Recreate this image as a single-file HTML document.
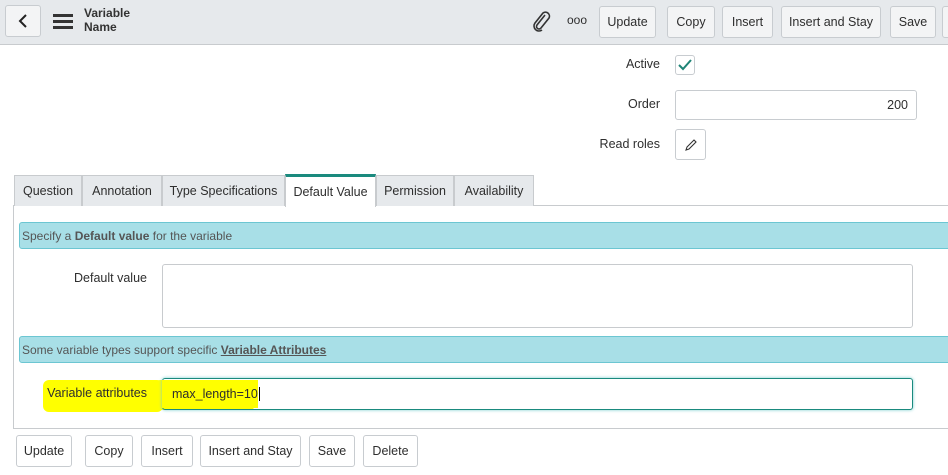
<!DOCTYPE html><html><head><style>
*{box-sizing:border-box}body{margin:0;width:948px;height:475px;overflow:hidden;background:#fff;font-family:"Liberation Sans",sans-serif;font-size:12.5px;color:#2e2e2e;position:relative}
.a{position:absolute}
.hdr{left:0;top:0;width:948px;height:45px;background:#e6e9ec;border-bottom:1px solid #c8cbce}
.btn{position:absolute;border:1px solid #c8ccd0;border-radius:3px;background:#f3f4f5;display:flex;align-items:center;justify-content:center;font-size:12.5px;color:#2e2e2e}
.wb{background:#fff}
.lbl{position:absolute;text-align:right;font-size:12.5px}
.tab{position:absolute;top:175px;height:31px;background:#e6e9ec;border:1px solid #c8cbce;border-bottom:none;display:flex;align-items:center;justify-content:center;font-size:12.5px}
.bar{position:absolute;left:19px;width:935px;height:27px;background:#a8dfe7;border:1px solid #6cc6d2;border-radius:3px;color:#555;padding-left:2px;display:flex;align-items:center;font-size:12px}
</style></head><body>
<div class="a hdr"></div>
<div class="btn" style="left:5px;top:5px;width:36px;height:32px;background:#f3f4f5"><svg width="12" height="16" viewBox="0 0 12 16"><path d="M9 2L3 8l6 6" stroke="#222" stroke-width="2" fill="none"/></svg></div>
<div class="a" style="left:53px;top:14px;width:20px;height:3px;background:#333"></div>
<div class="a" style="left:53px;top:20px;width:20px;height:3px;background:#333"></div>
<div class="a" style="left:53px;top:26px;width:20px;height:3px;background:#333"></div>
<div class="a" style="left:84px;top:6px;font-size:12px;line-height:14px;color:#333;font-weight:600">Variable<br>Name</div>
<svg class="a" style="left:531px;top:10px" width="20" height="22" viewBox="0 0 20 22"><path d="M14 5L6 15a2.5 2.5 0 0 0 4 3l8-10a4 4 0 0 0-6-5L4 13a5 5 0 0 0 7 7" stroke="#333" stroke-width="1.6" fill="none"/></svg>
<div class="a" style="left:567px;top:13px;font-size:12px;letter-spacing:0px">ooo</div>
<div class="btn" style="left:599px;top:6px;width:57px;height:32px">Update</div>
<div class="btn" style="left:667px;top:6px;width:48px;height:32px">Copy</div>
<div class="btn" style="left:722px;top:6px;width:51px;height:32px">Insert</div>
<div class="btn" style="left:781px;top:6px;width:100px;height:32px">Insert and Stay</div>
<div class="btn" style="left:890px;top:6px;width:46px;height:32px">Save</div>
<div class="btn" style="left:942px;top:6px;width:20px;height:32px"></div>

<div class="lbl" style="left:560px;width:100px;top:57px">Active</div>
<div class="btn wb" style="left:675px;top:55px;width:20px;height:20px"><svg width="14" height="12" viewBox="0 0 14 12"><path d="M1 6l4 4 8-9" stroke="#1f8476" stroke-width="2" fill="none"/></svg></div>
<div class="lbl" style="left:560px;width:100px;top:97px">Order</div>
<div class="btn wb" style="left:675px;top:90px;width:242px;height:30px;justify-content:flex-end;padding-right:8px">200</div>
<div class="lbl" style="left:560px;width:100px;top:137px">Read roles</div>
<div class="btn wb" style="left:675px;top:129px;width:31px;height:31px"><svg width="14" height="14" viewBox="0 0 14 14"><path d="M2 12l1-3 7-7 2 2-7 7z" stroke="#333" stroke-width="1.1" fill="none"/></svg></div>

<div class="a" style="left:13px;top:205px;width:940px;height:224px;border:1px solid #c8cbce"></div>
<div class="tab" style="left:14px;width:68px">Question</div>
<div class="tab" style="left:82px;width:80px">Annotation</div>
<div class="tab" style="left:162px;width:123px">Type Specifications</div>
<div class="tab" style="left:285px;width:91px;background:#fff;border-top:3px solid #1a8a7e;top:174px;height:33px;border-bottom:none">Default Value</div>
<div class="tab" style="left:376px;width:78px">Permission</div>
<div class="tab" style="left:454px;width:80px">Availability</div>
<div class="bar" style="top:222px">Specify a&nbsp;<b style="font-weight:600;color:#555">Default value</b>&nbsp;for the variable</div>
<div class="lbl" style="left:40px;width:107px;top:271px">Default value</div>
<div class="a" style="left:162px;top:264px;width:751px;height:64px;border:1px solid #c8cbce;border-radius:3px"></div>
<div class="bar" style="top:336px">Some variable types support specific&nbsp;<u style="font-weight:600;color:#555">Variable Attributes</u></div>
<div class="a" style="left:43px;top:380px;width:120px;height:32px;background:#ffff00;border-radius:6px"></div>
<div class="a" style="left:155px;top:380px;width:100px;height:30px;background:#ffff00;border-radius:5px"></div>
<div class="lbl" style="left:40px;width:107px;top:386px">Variable attributes</div>
<div class="a" style="left:162px;top:378px;width:751px;height:32px;border:1px solid #1a8a7e;border-radius:3px;box-shadow:0 0 3px #7cc"></div>
<div class="a" style="left:162px;top:380px;width:96px;height:28px;background:#ffff00"></div>
<div class="a" style="left:172px;top:387px">max_length=10<span style="border-left:1px solid #000;margin-left:1px"></span></div>

<div class="btn wb" style="left:16px;top:435px;width:56px;height:32px">Update</div>
<div class="btn wb" style="left:85px;top:435px;width:48px;height:32px">Copy</div>
<div class="btn wb" style="left:141px;top:435px;width:52px;height:32px">Insert</div>
<div class="btn wb" style="left:200px;top:435px;width:101px;height:32px">Insert and Stay</div>
<div class="btn wb" style="left:309px;top:435px;width:46px;height:32px">Save</div>
<div class="btn wb" style="left:363px;top:435px;width:55px;height:32px">Delete</div>
</body></html>
